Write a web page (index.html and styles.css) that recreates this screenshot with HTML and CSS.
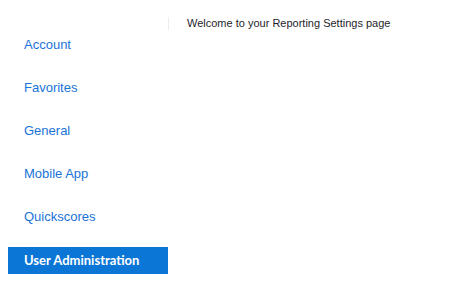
FILE: index.html
```html
<!DOCTYPE html>
<html>
<head>
<meta charset="utf-8">
<link rel="stylesheet" href="styles.css">
</head>
<body>
<div class="layout">
  <nav class="sidebar">
    <ul class="menu">
      <li class="item">Account</li>
      <li class="item">Favorites</li>
      <li class="item">General</li>
      <li class="item">Mobile App</li>
      <li class="item">Quickscores</li>
      <li class="item active">User Administration</li>
    </ul>
  </nav>
  <main class="content">
    <div class="welcome">Welcome to your Reporting Settings page</div>
  </main>
</div>
</body>
</html>
```
FILE: styles.css
```css
html, body { margin: 0; padding: 0; background: #fff; }
body { padding: 8px; font-family: "Liberation Sans", Arial, sans-serif; }
.layout { display: flex; align-items: flex-start; }
.sidebar { width: 160px; flex: none; padding-top: 23px; }
.menu { list-style: none; margin: 0; padding: 0; display: flex; flex-direction: column; gap: 16px; }
.item { height: 27px; line-height: 27px; padding-left: 16px; font-size: 13px; color: #1a73d8; }
.item.active { background: #0b76d6; color: #fff; font-family: Lato, "Liberation Sans", sans-serif; font-weight: 700; font-size: 13px; line-height: 26px; margin-top: 1px; }
.content { margin-top: 9px; border-left: 1px solid #ececec; padding-left: 18px; }
.welcome { font-size: 11px; line-height: 13px; color: #1e1e2a; }
```
